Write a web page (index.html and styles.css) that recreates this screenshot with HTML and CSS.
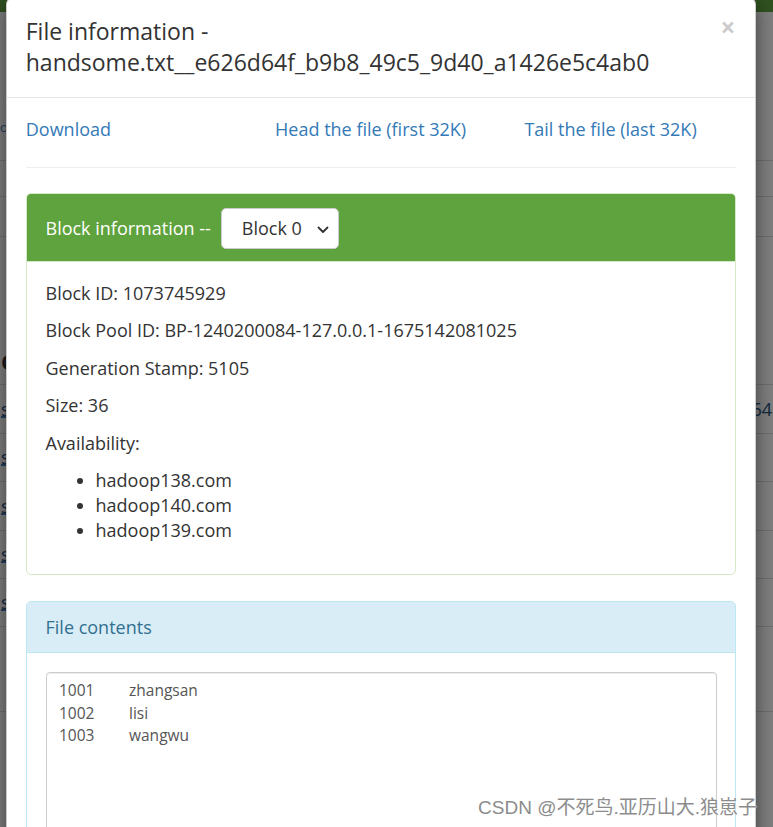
FILE: index.html
```html
<!DOCTYPE html>
<html lang="en">
<head>
<meta charset="utf-8">
<title>File information</title>
<link rel="stylesheet" href="styles.css">
</head>
<body>
<div class="page">
  <div class="navbar"></div>
  <div class="bg-row r1"><span class="bg-link">o</span></div>
  <div class="bg-row r2"></div>
  <div class="bg-row r3"></div>
  <div class="bg-row r4"><span class="bg-head">C</span></div>
  <div class="bg-row r5"><span class="bg-s">s</span><span class="bg-num">e626d64</span></div>
  <div class="bg-row r6"><span class="bg-s">s</span></div>
  <div class="bg-row r7"><span class="bg-s">s</span></div>
  <div class="bg-row r8"><span class="bg-s">s</span></div>
  <div class="bg-row r9"><span class="bg-s">s</span></div>
  <div class="bg-row r10"></div>
</div>
<div class="backdrop"></div>
<div class="modal">
  <div class="modal-content">
    <div class="modal-header">
      <h4 class="modal-title">File information - handsome.txt__e626d64f_b9b8_49c5_9d40_a1426e5c4ab0</h4>
      <span class="close">&times;</span>
    </div>
    <div class="modal-body">
      <div class="link-row">
        <div class="col"><a class="link">Download</a></div>
        <div class="col"><a class="link">Head the file (first 32K)</a></div>
        <div class="col"><a class="link">Tail the file (last 32K)</a></div>
      </div>
      <hr class="divider">
      <div class="panel panel-success">
        <div class="panel-heading heading-green">
          <span>Block information --</span>
          <span class="select-box"><span class="select-text">Block 0</span><svg class="chev" width="12" height="8" viewBox="0 0 12 8"><polyline points="1.5,1.5 6,6 10.5,1.5" fill="none" stroke="#333" stroke-width="1.8" stroke-linecap="round" stroke-linejoin="round"/></svg></span>
        </div>
        <div class="panel-body">
          <p class="info">Block ID: 1073745929</p>
          <p class="info">Block Pool ID: BP-1240200084-127.0.0.1-1675142081025</p>
          <p class="info">Generation Stamp: 5105</p>
          <p class="info">Size: 36</p>
          <p class="info">Availability:</p>
          <ul class="hosts">
            <li>hadoop138.com</li>
            <li>hadoop140.com</li>
            <li>hadoop139.com</li>
          </ul>
        </div>
      </div>
      <div class="panel panel-info">
        <div class="panel-heading heading-blue">File contents</div>
        <div class="panel-body">
          <textarea class="preview" readonly>1001	zhangsan
1002	lisi
1003	wangwu</textarea>
        </div>
      </div>
    </div>
  </div>
</div>
<div class="watermark">CSDN @不死鸟.亚历山大.狼崽子</div>
</body>
</html>
```
FILE: styles.css
```css
html, body {
  margin: 0;
  padding: 0;
}
body {
  width: 773px;
  height: 827px;
  overflow: hidden;
  position: relative;
  background: #fff;
  font-family: "Open Sans", "Noto Sans", sans-serif;
  font-size: 18px;
  line-height: 25px;
  color: #333;
}

/* page behind the dialog */
.page {
  display: flex;
  flex-direction: column;
}
.navbar {
  height: 12px;
  background: #5fa341;
}
.bg-row {
  box-sizing: border-box;
  border-bottom: 1px solid #ddd;
  display: flex;
  justify-content: space-between;
  align-items: center;
}
.r1 { height: 149px; align-items: flex-end; padding-bottom: 20px; }
.r2 { height: 36px; }
.r3 { height: 40px; }
.r4 { height: 148px; align-items: flex-end; padding-bottom: 10px; }
.r5 { height: 49px; }
.r6 { height: 48px; }
.r7 { height: 49px; }
.r8 { height: 48px; }
.r9 { height: 48px; }
.r10 { height: 85px; }
.bg-link {
  color: #337ab7;
  margin-left: 0;
  font-size: 13px;
}
.bg-head {
  font-weight: 700;
  font-size: 22px;
  margin-left: 1px;
}
.bg-s {
  margin-left: 1px;
  color: #23527c;
  text-decoration: underline dashed #337ab7;
}
.bg-num {
  color: #23527c;
  margin-right: 1px;
  font-size: 18px;
}

.backdrop {
  position: absolute;
  inset: 0;
  background: rgba(0, 0, 0, 0.5);
}

/* dialog */
.modal {
  position: absolute;
  left: 6px;
  top: -3.5px;
  width: 750px;
}
.modal-content {
  background: #fff;
  border: 1px solid rgba(0, 0, 0, 0.2);
  border-radius: 7.5px;
  box-shadow: 0 6px 19px rgba(0, 0, 0, 0.5);
}
.modal-header {
  display: flex;
  align-items: flex-start;
  padding: 18.75px;
  border-bottom: 1px solid #e5e5e5;
}
.modal-title {
  flex: 1;
  margin: 0;
  font-size: 23px;
  font-weight: 400;
  line-height: 31px;
  color: #333;
}
.close {
  font-size: 26px;
  font-weight: 700;
  line-height: 26px;
  color: #000;
  opacity: 0.2;
  margin-top: -2px;
  margin-right: 1px;
  margin-left: 10px;
}
.modal-body {
  padding: 18.75px;
}
.link-row {
  display: grid;
  grid-template-columns: repeat(3, 1fr);
  margin: 0 -18.75px;
}
.col {
  padding: 0 18.75px;
  line-height: 25px;
}
.link {
  color: #337ab7;
  text-decoration: none;
}
.divider {
  margin: 25px 0;
  border: 0;
  border-top: 1px solid #eee;
}

.panel {
  border: 1px solid transparent;
  border-radius: 5px;
  background: #fff;
}
.panel-success {
  border-color: #d6e9c6;
  margin-bottom: 26px;
}
.panel-info {
  border-color: #bce8f1;
}
.panel-heading {
  border-bottom: 1px solid transparent;
  border-top-left-radius: 4px;
  border-top-right-radius: 4px;
}
.heading-green {
  display: flex;
  align-items: center;
  gap: 10px;
  padding: 14px 18.75px 12px;
  background: #5fa33e;
  border-bottom-color: #d6e9c6;
  color: #fff;
}
.heading-blue {
  padding: 12.5px 18.75px;
  background: #d9edf7;
  border-bottom-color: #bce8f1;
  color: #31708f;
}
.select-box {
  box-sizing: border-box;
  display: inline-flex;
  align-items: center;
  justify-content: space-between;
  width: 118px;
  height: 41px;
  padding: 1px 9px 0 20px;
  background: #fff;
  border: 1px solid #ccc;
  border-radius: 5px;
  color: #333;
}
.chev {
  display: block;
  margin-top: 2px;
}
.panel-body {
  padding: 18.75px;
}
.info {
  margin: 0 0 12.5px;
}
.hosts {
  margin: 0 0 12.5px;
  padding-left: 50px;
}
.preview {
  display: block;
  box-sizing: border-box;
  width: 100%;
  height: 187.5px;
  margin: 0;
  padding: 6.25px 12.5px;
  border: 1px solid #ccc;
  border-radius: 3.75px;
  box-shadow: inset 0 1px 1px rgba(0, 0, 0, 0.075);
  font-family: "Open Sans", "Noto Sans", sans-serif;
  font-size: 15.5px;
  line-height: 22.5px;
  color: #555;
  tab-size: 70px;
  resize: vertical;
  outline: none;
}

.watermark {
  position: absolute;
  right: 16px;
  bottom: 8px;
  font-family: "Liberation Sans", "Noto Sans CJK SC", sans-serif;
  font-size: 19px;
  line-height: 22px;
  color: #8c8c8c;
  text-shadow: 0 0 2px #fff, 0 0 1px #fff;
}
```
